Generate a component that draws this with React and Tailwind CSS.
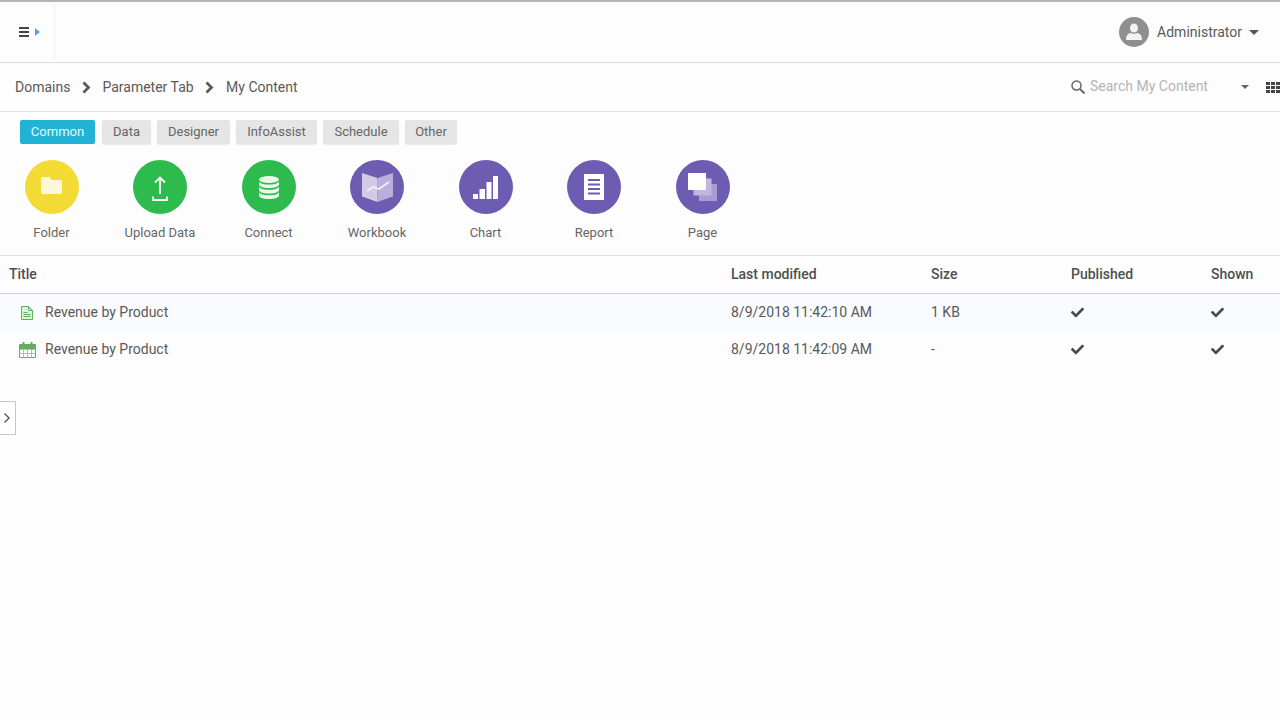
import { useState } from "react";
import { FaCheck } from "react-icons/fa";

const tabs = [
  { label: "Common", width: "w-[75px] mr-[1px]" },
  { label: "Data", width: "w-[49px]" },
  { label: "Designer", width: "w-[73px]" },
  { label: "InfoAssist", width: "w-[81px]" },
  { label: "Schedule", width: "w-[76px]" },
  { label: "Other", width: "w-[52px]" },
];

const FolderIcon = () => (
  <svg width="21" height="17" viewBox="0 0 21 17" className="mb-[3px]">
    <path d="M0 2C0 .8.8 0 2 0h6.500l2 3H19c1.200 0 2 .8 2 2v10c0 1.200-.8 2-2 2H2c-1.200 0-2-.8-2-2z" fill="#fdf8dc" />
  </svg>
);

const UploadIcon = () => (
  <svg width="16" height="25" viewBox="0 0 16 25" fill="none" stroke="#fff" strokeWidth="1.800" className="mt-[2px]">
    <path d="M8 18V1.500M3 6.500l5-5 5 5" />
    <path d="M1 20.500v3.500h14v-3.500" />
  </svg>
);

const DatabaseIcon = () => (
  <svg width="20" height="23" viewBox="0 0 20 23" fill="#e8f8eb">
    <ellipse cx="10" cy="3.500" rx="10" ry="3.500" />
    <path d="M0 5.500C1.500 8 6 8.500 10 8.500s8.500-.5 10-3v3.500c-1.500 2.500-6 3-10 3S1.500 11.500 0 9z" />
    <path d="M0 10.800c1.500 2.500 6 3 10 3s8.500-.5 10-3v3.700c-1.500 2.500-6 3-10 3s-8.500-.5-10-3z" />
    <path d="M0 16.300c1.500 2.500 6 3 10 3s8.500-.5 10-3v3.200c0 2-4.500 3.500-10 3.500S0 21.500 0 19.500z" />
  </svg>
);

const WorkbookIcon = () => (
  <svg width="31" height="30" viewBox="0 0 31 30">
    <path d="M0 1l15.500 5v24L0 24.500z" fill="#d2cbe8" />
    <path d="M31 1L15.500 6v24L31 24.500z" fill="#b9afdc" />
    <path d="M5 19l6-4 6 2 10-7" fill="none" stroke="#f3f0fa" strokeWidth="1.800" />
  </svg>
);

const ChartIcon = () => (
  <svg width="25" height="23" viewBox="0 0 25 23" fill="#fff">
    <rect x="0" y="18" width="5" height="5" />
    <rect x="6.500" y="13" width="5.500" height="10" />
    <rect x="13.500" y="6" width="5" height="17" />
    <rect x="20" y="0" width="5" height="23" />
  </svg>
);

const ReportIcon = () => (
  <svg width="20" height="26" viewBox="0 0 20 26">
    <rect width="20" height="26" fill="#fff" />
    <path d="M4 6h12M4 10.500h12M4 15h12M4 19.500h12" stroke="#6c5cb2" strokeWidth="2" />
  </svg>
);

const PageIcon = () => (
  <svg width="29" height="28" viewBox="0 0 29 28">
    <rect x="11" y="11" width="18" height="17" fill="#a89cd3" />
    <rect x="5.500" y="5.500" width="18" height="17" fill="#c0b7e0" />
    <rect x="0" y="0" width="18" height="17" fill="#fff" />
  </svg>
);

const tiles = [
  { label: "Folder", color: "bg-[#f4da35]", icon: <FolderIcon /> },
  { label: "Upload Data", color: "bg-[#2dbb4e]", icon: <UploadIcon /> },
  { label: "Connect", color: "bg-[#2dbb4e]", icon: <DatabaseIcon /> },
  { label: "Workbook", color: "bg-[#6c5cb2]", icon: <WorkbookIcon /> },
  { label: "Chart", color: "bg-[#6c5cb2]", icon: <ChartIcon /> },
  { label: "Report", color: "bg-[#6c5cb2]", icon: <ReportIcon /> },
  { label: "Page", color: "bg-[#6c5cb2]", icon: <PageIcon /> },
];

const Caret = ({ size = "border-x-[4px] border-t-[4px]", color = "border-t-[#555]" }) => (
  <span className={`inline-block w-0 h-0 border-x-transparent ${size} ${color}`}></span>
);

const Chevron = () => (
  <svg width="9" height="13" viewBox="0 0 9 13">
    <path d="M1.500 1.500L6.500 6.500l-5 5" fill="none" stroke="#5a5a5a" strokeWidth="2.800" />
  </svg>
);

const ReportFileIcon = () => (
  <svg width="12" height="14" viewBox="0 0 12 14" fill="none" stroke="#62ad60">
    <path d="M.5.500h7l4 4v9H.5z" fill="#dff0dd" />
    <path d="M7.500.500v4h4M2.500 6.500h4M2.500 8.500h7M2.500 10.500h7" />
  </svg>
);

const ScheduleIcon = () => (
  <svg width="17" height="16" viewBox="0 0 17 16" fill="none" stroke="#62ad60">
    <path d="M.5 3.500h16v12H.5z" />
    <path d="M.5 7.500h16M.5 11.500h16M4.500 3.500v12M8.500 3.500v12M12.500 3.500v12" stroke="#9ccd9a" />
    <path d="M.5 2.500h16v4H.5z" fill="#62ad60" />
    <path d="M4.500 0v3M12.500 0v3" strokeWidth="2" />
  </svg>
);

const rows = [
  { title: "Revenue by Product", icon: <ReportFileIcon />, modified: "8/9/2018 11:42:10 AM", size: "1 KB", tint: "bg-[#fafbfe]" },
  { title: "Revenue by Product", icon: <ScheduleIcon />, modified: "8/9/2018 11:42:09 AM", size: "-", tint: "" },
];

export default function App() {
  const [active] = useState("Common");

  return (
    <div className="relative w-[1280px] h-[720px] overflow-hidden bg-[#fdfdfd] text-[#595959] text-[14px] font-['Roboto',sans-serif]">
      {/* top bar */}
      <div className="h-[63px] flex items-center justify-between border-t-2 border-t-[#b4b4b4] border-b border-b-[#dcdcdc]">
        <div className="w-[55px] h-[56px] mb-[1px] flex items-center pl-[19px] gap-[6px] border-r border-[#f0f0f0]">
          <div className="w-[10px] flex flex-col gap-[2px]">
            <span className="h-[2px] bg-[#444]"></span>
            <span className="h-[2px] bg-[#444]"></span>
            <span className="h-[2px] bg-[#444]"></span>
          </div>
          <span className="w-0 h-0 border-y-[4px] border-y-transparent border-l-[5px] border-l-[#4da3ee]"></span>
        </div>
        <div className="flex items-center pr-[21px]">
          <div className="w-[30px] h-[30px] rounded-full bg-[#8f8f8f] flex items-center justify-center">
            <svg width="16" height="18" viewBox="0 0 16 18" fill="#f2f2f2">
              <ellipse cx="8" cy="5" rx="4" ry="4.500" />
              <path d="M0 17c0-5 2.500-7 5-7 1 1 5 1 6 0 2.500 0 5 2 5 7z" />
            </svg>
          </div>
          <span className="ml-[8px]">Administrator</span>
          <span className="ml-[7px] flex"><Caret size="border-x-[5px] border-t-[5px]" /></span>
        </div>
      </div>

      {/* breadcrumb */}
      <div className="h-[49px] flex items-center justify-between border-b border-[#dedede]">
        <div className="flex items-center pl-[15px]">
          <span>Domains</span>
          <span className="ml-[11.500px] mr-[11.500px] flex"><Chevron /></span>
          <span>Parameter Tab</span>
          <span className="ml-[11.500px] mr-[12px] flex"><Chevron /></span>
          <span>My Content</span>
        </div>
        <div className="flex items-center">
          <svg width="14" height="14" viewBox="0 0 14 14" fill="none" stroke="#666" strokeWidth="1.500">
            <circle cx="5.500" cy="5.500" r="4.500" />
            <path d="M9 9l4.500 4.500" strokeWidth="2" />
          </svg>
          <span className="ml-[5px] pb-[2px] w-[151px] text-[#b4b4b4]">Search My Content</span>
          <Caret color="border-t-[#666]" />
          <div className="ml-[17px] w-[14px] grid grid-cols-3 gap-[1px]">
            {Array.from({ length: 9 }).map((_, i) => (
              <span key={i} className="h-[3px] bg-[#444]"></span>
            ))}
          </div>
        </div>
      </div>

      {/* tabs */}
      <div className="flex gap-[6px] pl-[20px] pt-[8px]">
        {tabs.map((t) => (
          <div
            key={t.label}
            className={
              t.label === active
                ? `${t.width} h-[24px] flex items-center justify-center rounded-[2px] text-[13px] bg-[#22b3d4] text-[#e8f8fc]`
                : `${t.width} h-[24px] flex items-center justify-center rounded-[2px] text-[13px] bg-[#e5e5e5] text-[#666] shadow-[0_1px_1px_rgba(0,0,0,0.08)]`
            }
          >
            {t.label}
          </div>
        ))}
      </div>

      {/* create tiles */}
      <div className="flex pt-[16px] h-[112px] border-b border-[#e0e0e0]">
        {tiles.map((tile) => (
          <div key={tile.label} className="w-[108.500px] flex flex-col items-center first:ml-[-2.750px]">
            <div className={`w-[54px] h-[54px] rounded-full flex items-center justify-center ${tile.color}`}>
              {tile.icon}
            </div>
            <span className="mt-[9px] text-[13px] text-[#666]">{tile.label}</span>
          </div>
        ))}
      </div>

      {/* table */}
      <div className="h-[38px] flex items-center font-medium border-b border-[#cfcfcf] text-[#4f4f4f]">
        <div className="w-[731px] pl-[9px]">Title</div>
        <div className="w-[200px]">Last modified</div>
        <div className="w-[140px]">Size</div>
        <div className="w-[140px]">Published</div>
        <div>Shown</div>
      </div>
      {rows.map((r) => (
        <div key={r.modified} className={`h-[37px] flex items-center ${r.tint}`}>
          <div className="w-[731px] flex items-center">
            <div className="w-[45px] pl-[9px] flex justify-center">{r.icon}</div>
            <span>{r.title}</span>
          </div>
          <div className="w-[200px]">{r.modified}</div>
          <div className="w-[140px]">{r.size}</div>
          <div className="w-[140px] flex"><FaCheck size={13} color="#4a4a4a" /></div>
          <div className="flex"><FaCheck size={13} color="#4a4a4a" /></div>
        </div>
      ))}

      {/* side panel toggle */}
      <div className="absolute left-0 top-[401px] w-[16px] h-[34px] bg-white border border-l-0 border-[#c8c8c8] flex items-center justify-center pr-[2px]">
        <svg width="8" height="12" viewBox="0 0 8 12">
          <path d="M1.500 1.500L6 6l-4.500 4.500" fill="none" stroke="#555" strokeWidth="1.400" />
        </svg>
      </div>
    </div>
  );
}
